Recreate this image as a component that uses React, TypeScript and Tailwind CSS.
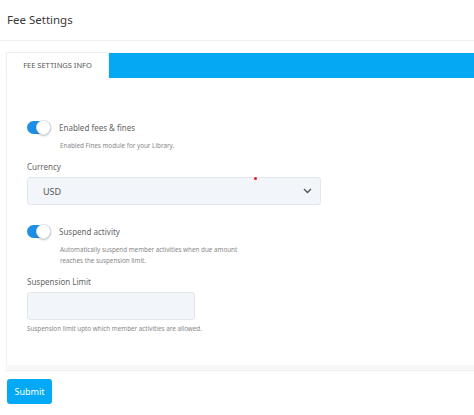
import { ReactElement } from 'react'

function Toggle(): ReactElement {
  return (
    <div className="relative h-[13px] w-[24px] shrink-0 rounded-full bg-[#1e8fe6]">
      <div className="absolute right-0 top-[-1px] h-[15px] w-[15px] rounded-full border border-gray-200 bg-white shadow-[0_1px_2px_rgba(0,0,0,0.25)]" />
    </div>
  )
}

export default function App(): ReactElement {
  return (
    <div className="h-[415px] w-[474px] overflow-hidden bg-white font-['Noto_Sans',sans-serif] text-[#333]">
      <div className="flex h-[41px] items-center border-b border-[#f0f0f0] pl-[7px]">
        <h1 className="text-[11.5px] font-normal text-[#3a3a3a]">Fee Settings</h1>
      </div>

      <div className="ml-[6px] mt-[11px] shadow-[0_1px_1px_rgba(0,0,0,0.06)]">
        <div className="flex h-[27px] items-stretch">
          <div className="flex w-[103px] items-center justify-center border-x border-t border-[#eeeeee] bg-white text-[7.5px] text-[#555]">
            FEE SETTINGS INFO
          </div>
          <div className="my-[1px] flex-1 bg-[#04a8f3]" />
        </div>

        <div className="relative h-[286px] border-l border-[#f3f3f3] pl-[20px] pt-[42px]">
          <div className="flex items-center gap-[8px]">
            <Toggle />
            <span className="text-[8px] text-[#666]">Enabled fees &amp; fines</span>
          </div>
          <p className="ml-[33px] mt-[7px] text-[6.3px] text-[#888]">Enabled Fines module for your Library.</p>

          <label className="mt-[11px] block text-[8px] text-[#666]">Currency</label>
          <div className="mt-[4px] flex h-[28px] w-[294px] items-center justify-between rounded-[3px] border border-[#e3e7ec] bg-[#f2f5f9] pl-[15px] pr-[8px]">
            <span className="text-[9px] text-[#555]">USD</span>
            <svg width="9" height="6" viewBox="0 0 9 6" fill="none">
              <path d="M1 1l3.5 3.5L8 1" stroke="#555" strokeWidth="1.4" />
            </svg>
          </div>
          <div className="absolute left-[247px] top-[98px] h-[3px] w-[3px] rounded-full bg-[#e02020]" />

          <div className="mt-[20px] flex items-center gap-[8px]">
            <Toggle />
            <span className="text-[8px] text-[#666]">Suspend activity</span>
          </div>
          <p className="ml-[33px] mt-[6px] w-[190px] text-[6.3px] leading-[11px] text-[#888]">
            Automatically suspend member activities when due amount reaches the suspension limit.
          </p>

          <label className="mt-[10px] block text-[8px] text-[#666]">Suspension Limit</label>
          <div className="mt-[4px] h-[28px] w-[168px] rounded-[3px] border border-[#e3e7ec] bg-[#f2f5f9]" />
          <p className="mt-[4px] text-[6.3px] text-[#888]">Suspension limit upto which member activities are allowed.</p>
        </div>
        <div className="h-[5px] bg-[#f8f8f8]" />
      </div>

      <div className="border-b border-[#f2f2f2] pb-[11px] pl-[7px] pt-[7px]">
        <button className="h-[25px] w-[45px] rounded-[3px] bg-[#03a9f4] text-[9px] text-white">
          Submit
        </button>
      </div>
    </div>
  )
}
